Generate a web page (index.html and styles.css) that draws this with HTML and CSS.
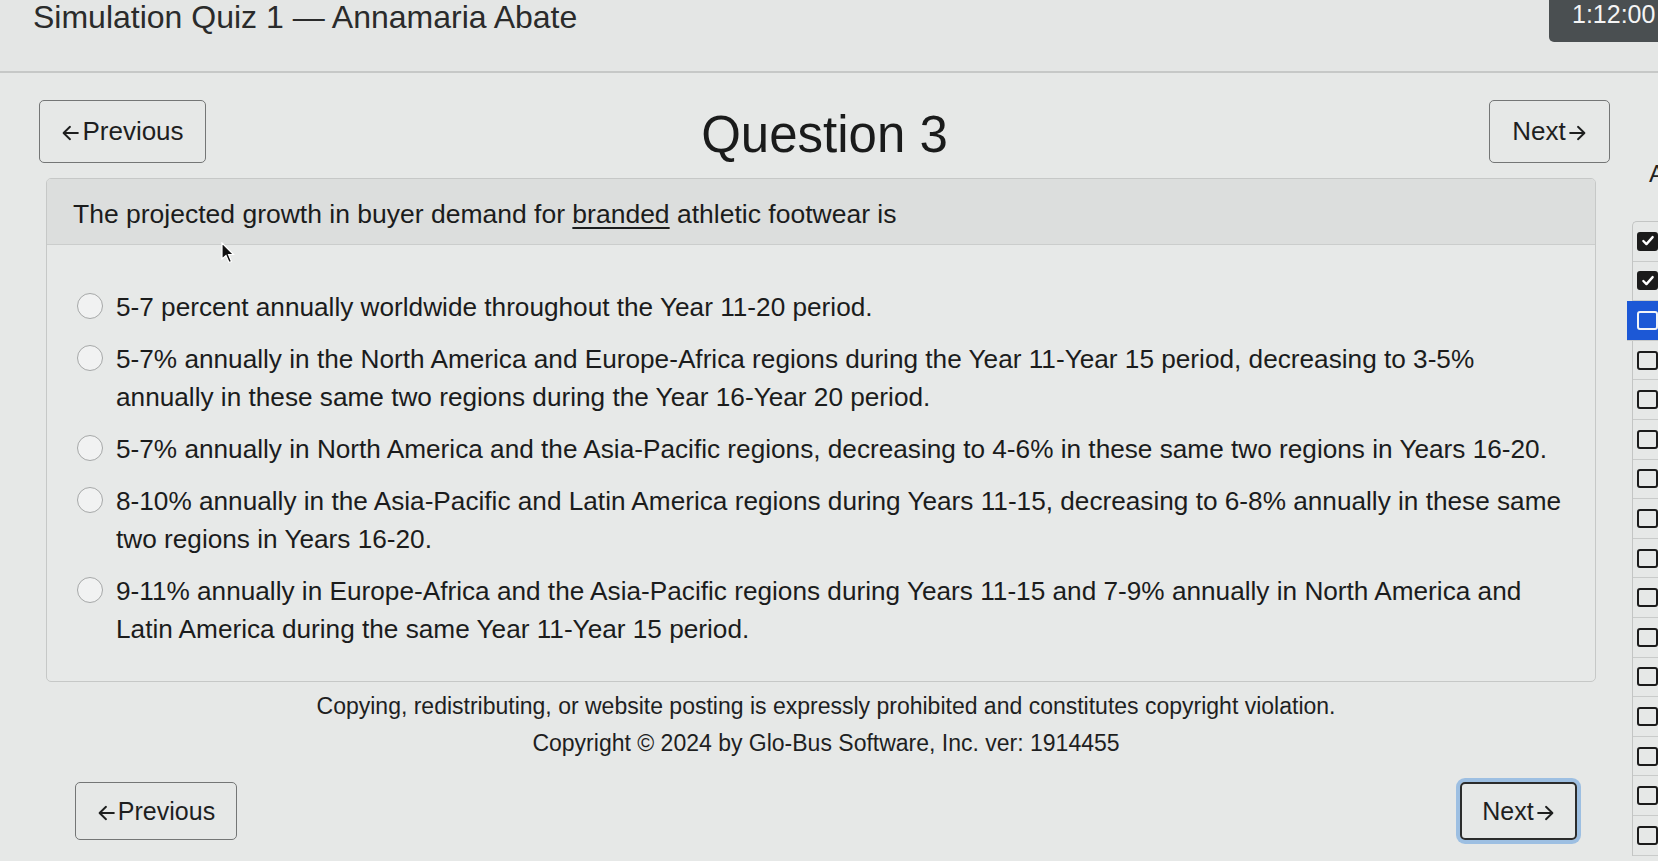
FILE: index.html
```html
<!DOCTYPE html>
<html lang="en">
<head>
<meta charset="utf-8">
<title>Simulation Quiz 1 — Annamaria Abate</title>
<link rel="stylesheet" href="styles.css">
</head>
<body>
<header class="topbar">
  <h1 class="quiz-title">Simulation Quiz 1 — Annamaria Abate</h1>
  <div class="timer">1:12:00</div>
</header>
<div class="layout">
  <main class="content">
    <div class="nav nav-top">
      <button class="btn btn-prev"><svg class="arrow arrow-left" viewBox="0 0 16 14" aria-hidden="true"><path d="M15 7H2.5M8 1.5L2.3 7L8 12.5"/></svg>Previous</button>
      <h2 class="question-title">Question 3</h2>
      <button class="btn btn-next">Next<svg class="arrow arrow-right" viewBox="0 0 16 14" aria-hidden="true"><path d="M1 7H13.5M8 1.5L13.7 7L8 12.5"/></svg></button>
    </div>
    <section class="panel">
      <div class="panel-head">The projected growth in buyer demand for <u>branded</u> athletic footwear is</div>
      <ul class="options">
        <li class="option"><span class="radio"></span><span class="option-text">5-7 percent annually worldwide throughout the Year 11-20 period.</span></li>
        <li class="option"><span class="radio"></span><span class="option-text">5-7% annually in the North America and Europe-Africa regions during the Year 11-Year 15 period, decreasing to 3-5%<br>annually in these same two regions during the Year 16-Year 20 period.</span></li>
        <li class="option"><span class="radio"></span><span class="option-text">5-7% annually in North America and the Asia-Pacific regions, decreasing to 4-6% in these same two regions in Years 16-20.</span></li>
        <li class="option"><span class="radio"></span><span class="option-text">8-10% annually in the Asia-Pacific and Latin America regions during Years 11-15, decreasing to 6-8% annually in these same<br>two regions in Years 16-20.</span></li>
        <li class="option"><span class="radio"></span><span class="option-text">9-11% annually in Europe-Africa and the Asia-Pacific regions during Years 11-15 and 7-9% annually in North America and<br>Latin America during the same Year 11-Year 15 period.</span></li>
      </ul>
    </section>
    <footer class="legal">
      <p>Copying, redistributing, or website posting is expressly prohibited and constitutes copyright violation.</p>
      <p>Copyright © 2024 by Glo-Bus Software, Inc. ver: 1914455</p>
    </footer>
    <div class="nav nav-bottom">
      <button class="btn btn-prev-b"><svg class="arrow arrow-left" viewBox="0 0 16 14" aria-hidden="true"><path d="M15 7H2.5M8 1.5L2.3 7L8 12.5"/></svg>Previous</button>
      <button class="btn btn-next-b">Next<svg class="arrow arrow-right" viewBox="0 0 16 14" aria-hidden="true"><path d="M1 7H13.5M8 1.5L13.7 7L8 12.5"/></svg></button>
    </div>
  </main>
  <aside class="sidebar">
    <div class="sidebar-head">A</div>
    <ul class="qlist">
      <li class="qrow"><span class="check checked"><svg viewBox="0 0 20 18" class="tick"><polyline points="4,9 8,13 16,4"/></svg></span></li>
      <li class="qrow"><span class="check checked"><svg viewBox="0 0 20 18" class="tick"><polyline points="4,9 8,13 16,4"/></svg></span></li>
      <li class="qrow active"><span class="check"></span></li>
      <li class="qrow"><span class="check"></span></li>
      <li class="qrow"><span class="check"></span></li>
      <li class="qrow"><span class="check"></span></li>
      <li class="qrow"><span class="check"></span></li>
      <li class="qrow"><span class="check"></span></li>
      <li class="qrow"><span class="check"></span></li>
      <li class="qrow"><span class="check"></span></li>
      <li class="qrow"><span class="check"></span></li>
      <li class="qrow"><span class="check"></span></li>
      <li class="qrow"><span class="check"></span></li>
      <li class="qrow"><span class="check"></span></li>
      <li class="qrow"><span class="check"></span></li>
      <li class="qrow"><span class="check"></span></li>
    </ul>
  </aside>
</div>
<svg class="cursor" viewBox="0 0 14 22" width="14" height="22"><path d="M1 1 L1 17 L5 13.5 L8 20.5 L10.5 19.5 L7.5 12.5 L12.5 12.5 Z"/></svg>
</body>
</html>
```
FILE: styles.css
```css
html, body {
  margin: 0;
  padding: 0;
  overflow: hidden;
}
body {
  width: 1658px;
  height: 861px;
  background: #e6e8e7;
  color: #1b1c1c;
  font-family: "Liberation Sans", Arial, sans-serif;
  position: relative;
}

/* top bar */
.topbar {
  display: flex;
  justify-content: space-between;
  align-items: flex-start;
  height: 71px;
  background: #e4e6e5;
  border-bottom: 2px solid #c6c8c7;
}
.quiz-title {
  margin: 0;
  padding: 2px 0 0 33px;
  font-size: 32px;
  font-weight: 400;
  line-height: 30px;
  color: #2a2b2b;
}
.timer {
  width: 109px;
  height: 42px;
  box-sizing: border-box;
  padding-left: 23px;
  background: #4a4f51;
  color: #f4f4f4;
  font-size: 25px;
  line-height: 28px;
  border-bottom-left-radius: 5px;
  white-space: nowrap;
  overflow: hidden;
}

/* layout */
.layout {
  display: flex;
}
.content {
  flex: 0 0 1632px;
}
.sidebar {
  flex: 0 0 200px;
}

/* buttons */
.btn {
  font-family: inherit;
  color: #1e1f1f;
  background: transparent;
  border: 1.5px solid #747676;
  border-radius: 5px;
  padding: 0;
  text-align: center;
  cursor: pointer;
  white-space: nowrap;
}
.arrow {
  width: 18px;
  height: 16px;
  vertical-align: -1px;
  fill: none;
  stroke: currentColor;
  stroke-width: 1.7;
  stroke-linecap: round;
  stroke-linejoin: round;
}
.arrow-left {
  margin-right: 3px;
}
.arrow-right {
  margin-left: 3px;
}

.nav-top {
  display: grid;
  grid-template-columns: 1fr auto 1fr;
  align-items: center;
  margin-top: 27px;
  padding: 0 22px 0 39px;
}
.btn-prev {
  justify-self: start;
  width: 167px;
  height: 63px;
  font-size: 26px;
}
.btn-next {
  justify-self: end;
  width: 121px;
  height: 63px;
  font-size: 26px;
}
.question-title {
  margin: 6px 0 0;
  font-size: 51px;
  font-weight: 400;
  line-height: 51px;
  color: #1a1b1b;
}

/* question panel */
.panel {
  margin: 15px 36px 0 46px;
  border: 1.5px solid #c6c8c7;
  border-radius: 5px;
  background: #e7e9e8;
  overflow: hidden;
}
.panel-head {
  background: #dcdedd;
  border-bottom: 1.5px solid #cbcdcc;
  padding: 16px 26px 11px;
  font-size: 26.5px;
  line-height: 38px;
}
.panel-head u {
  text-underline-offset: 4px;
  text-decoration-thickness: 1.5px;
}
.options {
  list-style: none;
  margin: 0;
  padding: 43px 10px 33px 30px;
}
.option {
  display: flex;
  align-items: flex-start;
  gap: 13px;
  margin-bottom: 14px;
  font-size: 26.2px;
  line-height: 38px;
}
.option:last-child {
  margin-bottom: 0;
}
.radio {
  flex: 0 0 auto;
  width: 26px;
  height: 26px;
  box-sizing: border-box;
  margin-top: 5px;
  border: 1.5px solid #a6a8a8;
  border-radius: 50%;
  background: #f1f2f2;
}
.option-text {
  white-space: nowrap;
}

/* footer */
.legal {
  margin-top: 6px;
  padding-left: 20px;
  text-align: center;
  font-size: 23px;
  line-height: 37px;
  color: #1e1f1f;
}
.legal p {
  margin: 0;
}

.nav-bottom {
  display: flex;
  justify-content: space-between;
  align-items: center;
  margin-top: 20px;
  padding: 0 55px 0 75px;
}
.btn-prev-b {
  width: 162px;
  height: 58px;
  font-size: 25px;
}
.btn-next-b {
  width: 117px;
  height: 58px;
  font-size: 25px;
  border: 2px solid #2b2c2c;
  box-shadow: 0 0 0 4px #9dbfe2;
}

/* sidebar */
.sidebar-head {
  margin-top: 86px;
  padding-left: 17px;
  font-size: 24px;
  line-height: 30px;
  color: #222;
}
.qlist {
  list-style: none;
  margin: 32px 0 0;
  padding: 0;
  border-left: 1.5px solid #c3c5c4;
  border-top: 1.5px solid #c3c5c4;
  border-top-left-radius: 5px;
}
.qrow {
  display: flex;
  align-items: center;
  height: 39.6px;
  box-sizing: border-box;
  padding-left: 4px;
  border-bottom: 1.5px solid #c9cbca;
}
.qrow.active {
  background: #1c58d6;
  margin-left: -6px;
  padding-left: 10px;
}
.check {
  width: 21px;
  height: 19px;
  box-sizing: border-box;
  border: 2.5px solid #1b1b1b;
  border-radius: 3px;
  display: flex;
  align-items: center;
  justify-content: center;
}
.check.checked {
  background: #1b1b1b;
}
.qrow.active .check {
  border-color: #f2f4f8;
}
.tick {
  width: 16px;
  height: 14px;
  fill: none;
  stroke: #ffffff;
  stroke-width: 3;
  stroke-linecap: round;
  stroke-linejoin: round;
}

/* mouse pointer over the page */
.cursor {
  position: absolute;
  left: 221px;
  top: 242px;
}
.cursor path {
  fill: #111;
  stroke: #fff;
  stroke-width: 1.2;
}
```
